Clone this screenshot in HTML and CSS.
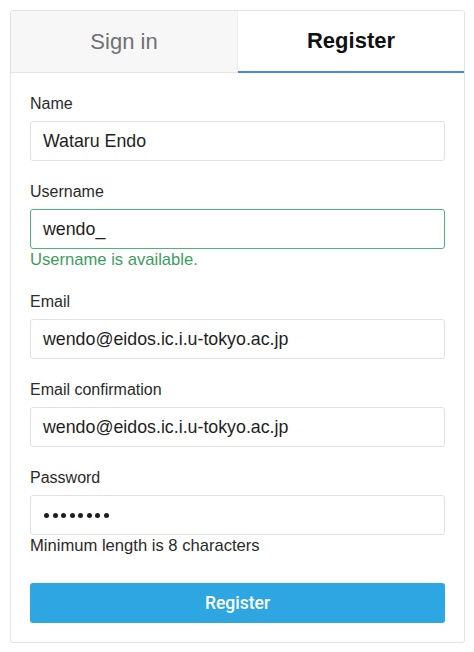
FILE: index.html
```html
<!DOCTYPE html>
<html lang="en">
<head>
<meta charset="utf-8">
<title>Register</title>
<link rel="stylesheet" href="styles.css">
</head>
<body>
<div class="card">
  <div class="tabs">
    <div class="tab">Sign in</div>
    <div class="tab active">Register</div>
  </div>
  <form class="form">
    <div class="group">
      <label class="label">Name</label>
      <div class="input">Wataru Endo</div>
    </div>
    <div class="group">
      <label class="label">Username</label>
      <div class="input valid">wendo_</div>
      <div class="help success">Username is available.</div>
    </div>
    <div class="group">
      <label class="label">Email</label>
      <div class="input">wendo@eidos.ic.i.u-tokyo.ac.jp</div>
    </div>
    <div class="group">
      <label class="label">Email confirmation</label>
      <div class="input">wendo@eidos.ic.i.u-tokyo.ac.jp</div>
    </div>
    <div class="group">
      <label class="label">Password</label>
      <div class="input" aria-label="password">
        <span class="dots"><span class="dot"></span><span class="dot"></span><span class="dot"></span><span class="dot"></span><span class="dot"></span><span class="dot"></span><span class="dot"></span><span class="dot"></span></span>
      </div>
      <div class="help">Minimum length is 8 characters</div>
    </div>
    <button type="button" class="btn">Register</button>
  </form>
</div>
</body>
</html>
```

FILE: styles.css
```css
* { box-sizing: border-box; }

html, body {
  margin: 0;
  padding: 0;
  background: #ffffff;
}

body {
  font-family: "Liberation Sans", Arial, sans-serif;
  color: #222;
}

.card {
  margin: 10px 0 0 10px;
  width: 455px;
  border: 1px solid #e3e3e3;
  border-radius: 3px;
  background: #fff;
  overflow: hidden;
}

.tabs {
  display: flex;
  height: 62px;
}

.tab {
  flex: 1 1 0;
  display: flex;
  align-items: center;
  justify-content: center;
  font-size: 22px;
  color: #707070;
  background: #f7f7f7;
  border-bottom: 1px solid #e3e3e3;
  border-right: 1px solid #ececec;
}

.tab.active {
  background: #fff;
  color: #111;
  font-weight: bold;
  border-right: none;
  border-bottom: 2px solid #4a86d8;
}

.form {
  padding: 20px 19px 19px;
  margin: 0;
}

.group {
  margin-bottom: 20px;
}

.label {
  display: block;
  font-size: 16px;
  line-height: 22px;
  margin-bottom: 6px;
  color: #2a2a2a;
}

.input {
  height: 40px;
  border: 1px solid #e2e2e2;
  border-radius: 3px;
  padding: 0 12px;
  display: flex;
  align-items: center;
  font-size: 17.8px;
  color: #1e1e1e;
  background: #fff;
}

.input.valid {
  border-color: #4fb47a;
}

.help {
  font-size: 16.6px;
  line-height: 22px;
  color: #2a2a2a;
}

.help.success {
  color: #3d9c5e;
}

.dots {
  display: flex;
  gap: 3.5px;
  padding-left: 1px;
}

.dot {
  width: 5px;
  height: 5px;
  border-radius: 50%;
  background: #1e1e1e;
}

.btn {
  display: block;
  width: 100%;
  height: 40px;
  margin-top: 26px;
  border: none;
  border-radius: 3px;
  background: #2ea6e1;
  color: #fff;
  font-family: Roboto, "Liberation Sans", sans-serif;
  font-weight: 500;
  font-size: 17.5px;
  cursor: pointer;
}
```
